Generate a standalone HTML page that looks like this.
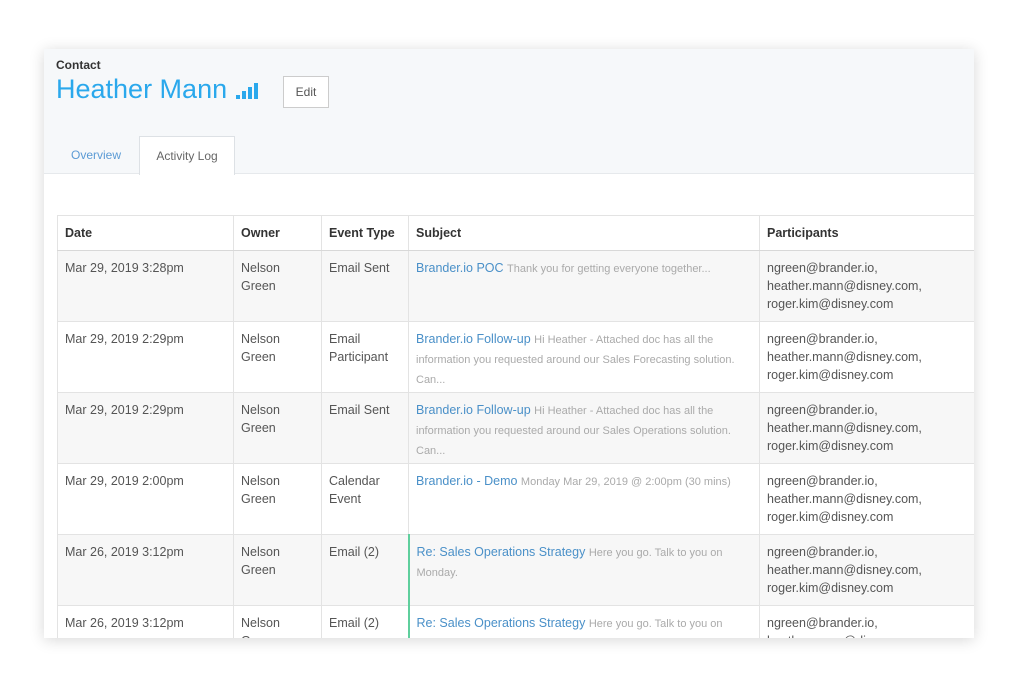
<!DOCTYPE html>
<html><head><meta charset="utf-8"><style>
*{margin:0;padding:0;box-sizing:border-box}
body{width:1024px;height:682px;background:#fff;font-family:"Liberation Sans",sans-serif;position:relative;overflow:hidden}
.card{position:absolute;left:44px;top:49px;width:930px;height:589px;background:#fff;box-shadow:0 2px 14px rgba(0,0,0,.16);overflow:hidden}
.hdr{position:absolute;left:0;top:0;width:930px;height:125px;background:#f6f8fa;border-bottom:1px solid #e6e9ec}
.lbl{position:absolute;left:12px;top:9px;font-size:12px;font-weight:bold;color:#333}
.name{position:absolute;left:12px;top:25px;font-size:27px;color:#2aa8ec}
.bars{position:absolute;left:192px;top:34px}
.edit{position:absolute;left:239px;top:27px;width:46px;height:32px;border:1px solid #ccc;background:#fff;font-size:12px;color:#555;text-align:center;line-height:30px}
.tab1{position:absolute;left:27px;top:99px;font-size:12px;color:#5b9bd5}
.tab2{position:absolute;left:95px;top:87px;width:96px;height:39px;background:#fff;border:1px solid #dde1e5;border-bottom:none;font-size:12px;color:#666;text-align:center;line-height:38px}
table{position:absolute;left:13px;top:166px;border-collapse:collapse;table-layout:fixed;width:917px}
td,th{border:1px solid #e3e3e3;vertical-align:top;text-align:left;font-size:12.5px;color:#555;padding:8px 7px;line-height:18px}
th{font-weight:bold;color:#333;height:35px;padding-top:8px;border-bottom:1px solid #d8d8d8}
tr.r td{height:71px}
tr.g td{background:#f7f7f7}
.s{color:#4a90c8;font-size:12.5px}
.p{color:#aaa;font-size:11px;line-height:19px}
td.sb{padding-top:8px;padding-bottom:0;line-height:19px}
td.gl{border-left:2px solid #5fcf9d}
</style></head><body>
<div class="card">
<div class="hdr">
<div class="lbl">Contact</div>
<div class="name">Heather Mann</div>
<svg class="bars" width="22" height="16" viewBox="0 0 22 16"><rect x="0" y="12" width="4" height="4" fill="#2aa8ec"/><rect x="6" y="8" width="4" height="8" fill="#2aa8ec"/><rect x="12" y="4" width="4" height="12" fill="#2aa8ec"/><rect x="18" y="0" width="4" height="16" fill="#2aa8ec"/></svg>
<div class="edit">Edit</div>
<div class="tab1">Overview</div>
<div class="tab2">Activity Log</div>
</div>
<table>
<colgroup><col style="width:176px"><col style="width:88px"><col style="width:87px"><col style="width:351px"><col style="width:215px"></colgroup>
<tr><th>Date</th><th>Owner</th><th>Event Type</th><th>Subject</th><th>Participants</th></tr>
<tr class="r g"><td>Mar 29, 2019 3:28pm</td><td>Nelson Green</td><td>Email Sent</td><td class="sb"><span class="s">Brander.io POC</span> <span class="p">Thank you for getting everyone together...</span></td><td>ngreen@brander.io,<br>heather.mann@disney.com,<br>roger.kim@disney.com</td></tr>
<tr class="r"><td>Mar 29, 2019 2:29pm</td><td>Nelson Green</td><td>Email Participant</td><td class="sb"><span class="s">Brander.io Follow-up</span> <span class="p">Hi Heather - Attached doc has all the information you requested around our Sales Forecasting solution.<br>Can...</span></td><td>ngreen@brander.io,<br>heather.mann@disney.com,<br>roger.kim@disney.com</td></tr>
<tr class="r g"><td>Mar 29, 2019 2:29pm</td><td>Nelson Green</td><td>Email Sent</td><td class="sb"><span class="s">Brander.io Follow-up</span> <span class="p">Hi Heather - Attached doc has all the information you requested around our Sales Operations solution.<br>Can...</span></td><td>ngreen@brander.io,<br>heather.mann@disney.com,<br>roger.kim@disney.com</td></tr>
<tr class="r"><td>Mar 29, 2019 2:00pm</td><td>Nelson Green</td><td>Calendar Event</td><td class="sb"><span class="s">Brander.io - Demo</span> <span class="p">Monday Mar 29, 2019 @ 2:00pm (30 mins)</span></td><td>ngreen@brander.io,<br>heather.mann@disney.com,<br>roger.kim@disney.com</td></tr>
<tr class="r g"><td>Mar 26, 2019 3:12pm</td><td>Nelson Green</td><td>Email (2)</td><td class="sb gl"><span class="s">Re: Sales Operations Strategy</span> <span class="p">Here you go. Talk to you on Monday.</span></td><td>ngreen@brander.io,<br>heather.mann@disney.com,<br>roger.kim@disney.com</td></tr>
<tr class="r"><td>Mar 26, 2019 3:12pm</td><td>Nelson Green</td><td>Email (2)</td><td class="sb gl"><span class="s">Re: Sales Operations Strategy</span> <span class="p">Here you go. Talk to you on Monday.</span></td><td>ngreen@brander.io,<br>heather.mann@disney.com,<br>roger.kim@disney.com</td></tr>
</table>
</div>
</body></html>
